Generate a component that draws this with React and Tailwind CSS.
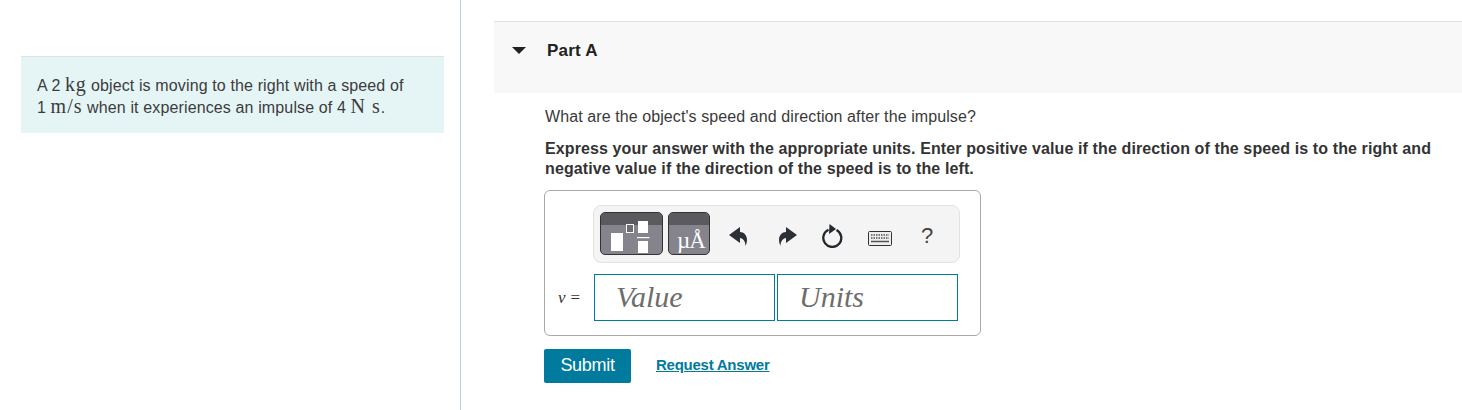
const Sans = '[font-family:"Liberation_Sans",Arial,sans-serif]';

function Tmpl() {
  return (
    <div className="relative w-[63px] h-[43px] rounded-[5px] border border-[#333] overflow-hidden bg-[#85848c]">
      <div className="h-[12px] bg-[#5b5b5f]" />
      <svg className="absolute inset-0" width="61" height="41" viewBox="0 0 61 41">
        <rect x="10" y="20" width="12" height="18" fill="#fff" />
        <rect x="25.5" y="11.5" width="7" height="8" fill="#6d6d74" stroke="#fff" strokeWidth="1" />
        <rect x="37" y="8" width="10" height="12" fill="#fff" />
        <rect x="36" y="24" width="12.5" height="1.2" fill="#fff" />
        <rect x="37" y="28" width="10" height="12" fill="#fff" />
      </svg>
    </div>
  );
}

function Units() {
  return (
    <div className="relative w-[42px] h-[43px] rounded-[5px] border border-[#333] overflow-hidden bg-[#85848c]">
      <div className="h-[12px] bg-[#5b5b5f]" />
      <span className="absolute left-[8px] top-[15px] text-[23px] leading-[26px] text-white [font-family:'Liberation_Serif',serif] tracking-[-1px]">µÅ</span>
    </div>
  );
}

const Undo = ({ flip }) => (
  <svg width="18" height="19" viewBox="0 0 18 19" className={flip ? "-scale-x-100 mt-[6px]" : "mt-[6px]"}>
    <path d="M0 8 L11 0 V5 C15 5 18 8.5 18 13 C18 15 17.5 17 16.5 19 C16.5 14 14 11.5 11 11 V16 Z" fill="#2b2f36" />
  </svg>
);

export default function App() {
  return (
    <div className={`${Sans} flex w-[1462px] h-[410px] overflow-hidden bg-white text-[#333]`}>
      <div className="w-[461px] shrink-0 border-r border-[#b9cde3] pl-[21px] pr-[16px] pt-[56px]">
        <div className="h-[77px] border-t border-[#dce3e6] bg-[#e5f5f6] pl-[16px] pt-[17px] text-[16px] leading-[20px] tracking-[0.13px] text-[#3c3c3c]">
          <div>A 2 <span className="[font-family:'Liberation_Serif',serif] text-[20px] leading-[20px] tracking-[0.6px]">kg</span> object is moving to the right with a speed of</div>
          <div>1 <span className="[font-family:'Liberation_Serif',serif] text-[20px] leading-[20px] tracking-[1px]">m/s</span> when it experiences an impulse of 4 <span className="[font-family:'Liberation_Serif',serif] text-[20px] leading-[20px] tracking-[1px]">N s</span>.</div>
        </div>
      </div>
      <div className="flex-1 pl-[33px] pt-[21px]">
        <div className="h-[72px] border-t border-[#dfe2e4] bg-[#f8f8f8] flex items-center pb-[14px]">
          <svg width="14" height="7" viewBox="0 0 14 7" className="ml-[18px]"><path d="M0 0H14L7 7Z" fill="#222" /></svg>
          <span className="ml-[21px] text-[17px] font-bold text-[#222] tracking-[0.2px]">Part A</span>
        </div>
        <div className="pl-[50px]">
          <p className="mt-[13px] pl-[1px] text-[16px] leading-[21px] tracking-[0.09px] text-[#3a3a3a]">What are the object's speed and direction after the impulse?</p>
          <p className="mt-[12px] pl-[1px] w-[900px] text-[16px] leading-[20px] font-bold tracking-[0.11px] text-[#333]">Express your answer with the appropriate units. Enter positive value if the direction of the speed is to the right and negative value if the direction of the speed is to the left.</p>
          <div className="mt-[11px] w-[437px] h-[146px] rounded-[6px] border border-[#a9a9a9] pt-[14px] pl-[48px]">
            <div className="w-[367px] h-[58px] rounded-[8px] border border-[#e3e3e3] bg-[#f4f4f4] flex items-center pl-[6px] pb-[2px]">
              <Tmpl />
              <div className="ml-[5px]"><Units /></div>
              <div className="ml-[19px]"><Undo /></div>
              <div className="ml-[32px]"><Undo flip /></div>
              <svg width="22" height="24" viewBox="0 0 22 24" className="ml-[24px] mt-[5px]">
                <path d="M7.5 5.8 A9 9 0 1 0 15.5 6" fill="none" stroke="#23272e" strokeWidth="2.3" />
                <path d="M8.5 0 L15 5 L8 10 Z" fill="#23272e" />
              </svg>
              <svg width="24" height="15" viewBox="0 0 24 15" className="ml-[25px] mt-[11px]">
                <rect x="0.5" y="0.5" width="23" height="14" rx="1" fill="#eee" stroke="#333" />
                <path d="M3 4H21M3 7H21" stroke="#555" strokeWidth="1.5" strokeDasharray="1.5 1" />
                <path d="M3 10.5H21" stroke="#555" strokeWidth="1.5" />
              </svg>
              <span className="ml-[29px] mt-[6px] text-[22px] leading-none text-[#444]">?</span>
            </div>
            <div className="flex items-center mt-[11px] ml-[1px]">
              <span className="-ml-[36px] w-[36px] text-[17px] [font-family:'Liberation_Serif',serif] text-[#333] tracking-[0.3px]"><i>v</i> =</span>
              <div className="w-[181px] h-[47px] border border-[#007a9d] pl-[21px] pb-[2px] flex items-center text-[30px] italic text-[#6d6d6d] [font-family:'Liberation_Serif',serif]">Value</div>
              <div className="ml-[2px] w-[181px] h-[47px] border border-[#007a9d] pl-[21px] pb-[2px] flex items-center text-[30px] italic text-[#6d6d6d] [font-family:'Liberation_Serif',serif]">Units</div>
            </div>
          </div>
          <div className="mt-[13px] flex items-center">
            <button className="w-[87px] h-[34px] rounded-[2px] bg-[#007a9d] text-white text-[18px] tracking-[-0.3px] pb-[2px]">Submit</button>
            <a className="ml-[25px] mb-[2px] text-[15px] font-bold text-[#007a9d] underline tracking-[-0.25px]">Request Answer</a>
          </div>
        </div>
      </div>
    </div>
  );
}
